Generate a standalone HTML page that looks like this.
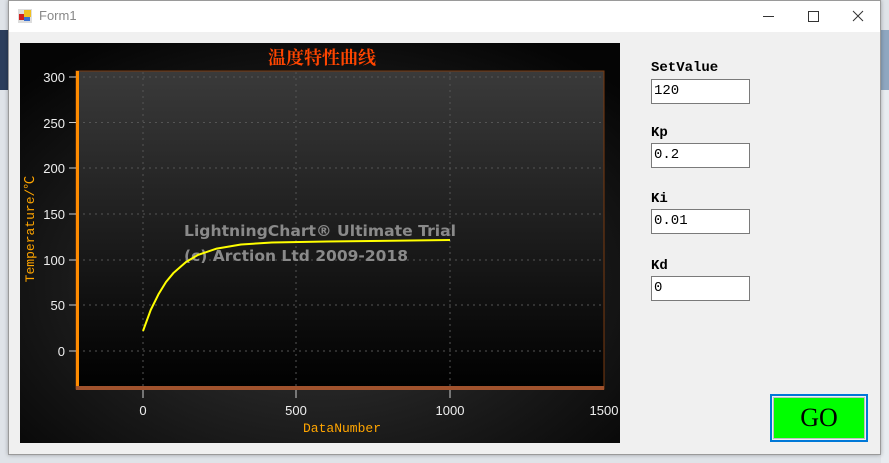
<!DOCTYPE html>
<html><head><meta charset="utf-8"><style>
body{margin:0;width:889px;height:463px;overflow:hidden;background:#dfe3e8;font-family:"Liberation Sans",sans-serif;position:relative}
.win{position:absolute;left:8px;top:0;width:873px;height:455px;background:#f0f0f0;border:1px solid #9a9a9a;box-sizing:border-box;box-shadow:0 0 4px rgba(0,0,0,.3)}
.title{position:absolute;left:0;top:0;right:0;height:31px;background:#fff}
.lbl{position:absolute;left:651px;font:bold 14px "Liberation Mono","WenQuanYi Zen Hei",monospace;color:#000}
.tb{position:absolute;left:651px;width:99px;height:25px;background:#fff;border:1px solid #7a7a7a;box-sizing:border-box;font:14px "Liberation Mono",monospace;padding:3px 0 0 2px}
</style></head><body>
<div style="position:absolute;left:0;top:30px;width:8px;height:60px;background:#2c3e5c"></div>
<div style="position:absolute;left:881px;top:30px;width:8px;height:433px;background:#e8ecf0"></div>
<div style="position:absolute;left:881px;top:30px;width:8px;height:60px;background:#8fa7c0"></div>
<div class="win">
<div class="title">
<svg style="position:absolute;left:9px;top:8px" width="14" height="14"><rect x="0" y="0" width="14" height="14" fill="#ddd"/><rect x="1" y="5" width="5" height="6" fill="#d02020"/><rect x="6" y="1" width="7" height="7" fill="#f0c020"/><rect x="6" y="8" width="6" height="4" fill="#3a70d0"/></svg>
<div style="position:absolute;left:30px;top:7px;font-size:13px;color:#888">Form1</div>
<div style="position:absolute;left:754px;top:15px;width:11px;height:1px;background:#333"></div>
<div style="position:absolute;left:799px;top:10px;width:9px;height:9px;border:1px solid #333"></div>
<svg style="position:absolute;left:843px;top:9px" width="12" height="12"><path d="M1 1L11 11M11 1L1 11" stroke="#333" stroke-width="1"/></svg>
</div>
</div>
<svg style="position:absolute;left:20px;top:43px" width="600" height="400">
<defs>
<radialGradient id="bg" cx="50%" cy="60%" r="70%"><stop offset="0" stop-color="#383838"/><stop offset="1" stop-color="#050505"/></radialGradient>
<linearGradient id="pa" x1="0" y1="0" x2="0" y2="1"><stop offset="0" stop-color="#3a3a3a"/><stop offset="0.45" stop-color="#202020"/><stop offset="1" stop-color="#000"/></linearGradient>
</defs>
<rect width="600" height="400" fill="url(#bg)"/>
<rect x="56" y="28" width="528" height="318" fill="url(#pa)" stroke="#7a3a10"/>
<g stroke="#555" stroke-dasharray="2,4" stroke-width="1">
<line x1="57" x2="584" y1="34" y2="34"/><line x1="57" x2="584" y1="79.5" y2="79.5"/><line x1="57" x2="584" y1="125" y2="125"/><line x1="57" x2="584" y1="171" y2="171"/><line x1="57" x2="584" y1="217" y2="217"/><line x1="57" x2="584" y1="262" y2="262"/><line x1="57" x2="584" y1="308" y2="308"/>
<line x1="123" x2="123" y1="29" y2="345"/><line x1="276" x2="276" y1="29" y2="345"/><line x1="430" x2="430" y1="29" y2="345"/>
</g>
<rect x="56" y="28" width="3" height="318" fill="#ff8c00"/>
<rect x="56" y="343" width="528" height="4" fill="#a0522d"/>
<g stroke="#ccc" stroke-width="1">
<line x1="49" x2="56" y1="34" y2="34"/><line x1="49" x2="56" y1="79.5" y2="79.5"/><line x1="49" x2="56" y1="125" y2="125"/><line x1="49" x2="56" y1="171" y2="171"/><line x1="49" x2="56" y1="217" y2="217"/><line x1="49" x2="56" y1="262" y2="262"/><line x1="49" x2="56" y1="308" y2="308"/>
<line x1="123" x2="123" y1="347" y2="355"/><line x1="276" x2="276" y1="347" y2="355"/><line x1="430" x2="430" y1="347" y2="355"/>
</g>
<g fill="#eee" font-size="13" font-family="Liberation Sans" text-anchor="end">
<text x="45" y="39">300</text><text x="45" y="85">250</text><text x="45" y="130">200</text><text x="45" y="176">150</text><text x="45" y="222">100</text><text x="45" y="267">50</text><text x="45" y="313">0</text>
</g>
<g fill="#eee" font-size="13" font-family="Liberation Sans" text-anchor="middle">
<text x="123" y="372">0</text><text x="276" y="372">500</text><text x="430" y="372">1000</text><text x="584" y="372">1500</text>
</g>
<text x="302" y="21" text-anchor="middle" fill="#ff4500" font-size="18" font-weight="bold" font-family="Noto Serif CJK SC,serif">温度特性曲线</text>
<text x="322" y="389" text-anchor="middle" fill="#ffa500" font-size="13" font-family="Liberation Mono,monospace">DataNumber</text>
<text transform="translate(14,186) rotate(-90)" text-anchor="middle" fill="#ffa500" font-size="13" font-family="Liberation Mono,Noto Sans CJK SC,monospace">Temperature/℃</text>
<g fill="#8a8a8a" font-size="15.5" font-weight="bold" font-family="DejaVu Sans,sans-serif" textLength="272"><text x="164" y="193" textLength="272" lengthAdjust="spacingAndGlyphs">LightningChart® Ultimate Trial</text><text x="164" y="218" textLength="224" lengthAdjust="spacingAndGlyphs">(c) Arction Ltd 2009-2018</text></g>
<polyline fill="none" stroke="#ffff00" stroke-width="2" stroke-linejoin="round" points="123,288 130.7,267 138.4,251.4 146,239 153.7,229.7 166,219 178,211.9 196.7,205.6 221,201.5 252,199.5 307,198.5 430,197"/>
</svg>
<div class="lbl" style="top:60px">SetValue</div><div class="tb" style="top:79px">120</div>
<div class="lbl" style="top:125px">Kp</div><div class="tb" style="top:143px">0.2</div>
<div class="lbl" style="top:191px">Ki</div><div class="tb" style="top:209px">0.01</div>
<div class="lbl" style="top:258px">Kd</div><div class="tb" style="top:276px">0</div>
<div style="position:absolute;left:770px;top:394px;width:98px;height:48px;box-sizing:border-box;border:2px solid #0078d7;padding:1px"><div style="width:100%;height:100%;background:#00ff00;border:1px solid #c0c0c0;box-sizing:border-box;text-align:center;font:26px 'Liberation Serif',serif;line-height:40px">GO</div></div>
</body></html>
